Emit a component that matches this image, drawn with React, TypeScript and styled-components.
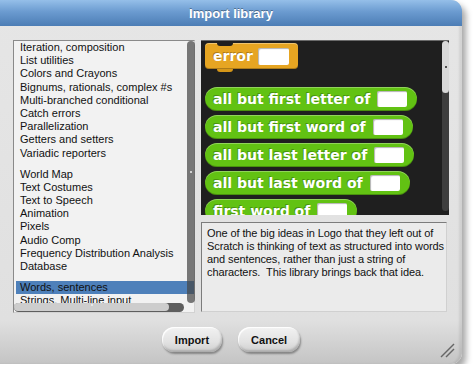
import { FC } from "react";
import { styled, createGlobalStyle } from "styled-components";

const GlobalStyle = createGlobalStyle`
  html, body {
    margin: 0;
    padding: 0;
    background: #ffffff;
  }
`;

type LibItem = { label: string; selected?: boolean } | "sep";

const libraries: LibItem[] = [
  { label: "Iteration, composition" },
  { label: "List utilities" },
  { label: "Colors and Crayons" },
  { label: "Bignums, rationals, complex #s" },
  { label: "Multi-branched conditional" },
  { label: "Catch errors" },
  { label: "Parallelization" },
  { label: "Getters and setters" },
  { label: "Variadic reporters" },
  "sep",
  { label: "World Map" },
  { label: "Text Costumes" },
  { label: "Text to Speech" },
  { label: "Animation" },
  { label: "Pixels" },
  { label: "Audio Comp" },
  { label: "Frequency Distribution Analysis" },
  { label: "Database" },
  "sep",
  { label: "Words, sentences", selected: true },
  { label: "Strings, Multi-line input" },
  { label: "Text processing" },
];

const reporters = [
  "all but first letter of",
  "all but first word of",
  "all but last letter of",
  "all but last word of",
  "first word of",
];

const App: FC = () => {
  return (
    <>
      <GlobalStyle />
      <Dialog>
        <TitleBar>Import library</TitleBar>
        <Body>
          <Panes>
            <ListPane>
              <ListBox>
                {libraries.map((item, i) =>
                  item === "sep" ? (
                    <Separator key={i} />
                  ) : (
                    <ListItem key={i} $selected={item.selected}>
                      {item.label}
                    </ListItem>
                  )
                )}
              </ListBox>
              <VScroll>
                <ScrollDot />
              </VScroll>
              <HScroll>
                <HThumb>
                  <ScrollDot />
                </HThumb>
              </HScroll>
            </ListPane>

            <RightColumn>
              <Palette>
                <BlockStack>
                  <CommandBlock>
                    <BlockLabel>error</BlockLabel>
                    <Slot $w={31} $h={17} />
                  </CommandBlock>
                  {reporters.map((r) => (
                    <Reporter key={r}>
                      <BlockLabel>{r}</BlockLabel>
                      <Slot $w={30} $h={16} />
                    </Reporter>
                  ))}
                </BlockStack>
                <PaletteScroll>
                  <PaletteThumb>
                    <ScrollDot $dark />
                  </PaletteThumb>
                </PaletteScroll>
              </Palette>
              <Description>
                One of the big ideas in Logo that they left out of Scratch is
                thinking of text as structured into words and sentences, rather
                than just a string of characters.&nbsp; This library brings back
                that idea.
              </Description>
            </RightColumn>
          </Panes>

          <ButtonRow>
            <Button>Import</Button>
            <Button>Cancel</Button>
          </ButtonRow>

          <Grip width="16" height="16" viewBox="0 0 16 16">
            <line x1="2" y1="15" x2="15" y2="2" stroke="#666" strokeWidth="1.4" />
            <line x1="7" y1="15" x2="15" y2="7" stroke="#666" strokeWidth="1.4" />
          </Grip>
        </Body>
      </Dialog>
    </>
  );
};

const Dialog = styled.div`
  width: 462px;
  height: 364px;
  display: flex;
  flex-direction: column;
  background: linear-gradient(to bottom, #e6e6e6 0%, #e0e0e0 88%, #c4c4c4 100%);
  border-radius: 0 11px 11px 0;
  box-shadow: 4px 5px 6px rgba(0, 0, 0, 0.35), inset -3px 0 2px rgba(0, 0, 0, 0.08);
  overflow: hidden;
  font-family: "Liberation Sans", Arial, sans-serif;
`;

const TitleBar = styled.div`
  height: 26px;
  flex-shrink: 0;
  display: flex;
  align-items: center;
  justify-content: center;
  background: linear-gradient(to bottom, #95bfe9 0%, #6b9bd0 45%, #4c7db5 100%);
  color: #ffffff;
  font-weight: bold;
  font-size: 13px;
  text-shadow: 0 -1px 0 rgba(0, 0, 0, 0.35);
`;

const Body = styled.div`
  flex: 1;
  position: relative;
  display: flex;
  flex-direction: column;
  padding: 14px 13px 0 13px;
`;

const Panes = styled.div`
  display: flex;
  gap: 6px;
  height: 273px;
`;

const ListPane = styled.div`
  position: relative;
  width: 182px;
  height: 273px;
`;

const ListBox = styled.div`
  height: 100%;
  box-sizing: border-box;
  background: #f2f2f2;
  border: 1px solid #d2d2d2;
  border-top-color: #8a8a8a;
  border-left-color: #8a8a8a;
  overflow: hidden;
  font-size: 11px;
  color: #111;
`;

const ListItem = styled.div<{ $selected?: boolean }>`
  height: 13.2px;
  line-height: 13.2px;
  white-space: nowrap;
  padding-left: ${(p) => (p.$selected ? "4px" : "6px")};
  margin-left: ${(p) => (p.$selected ? "2px" : "0")};
  background: ${(p) => (p.$selected ? "#4e80ba" : "transparent")};
`;

const Separator = styled.div`
  height: 8px;
`;

const VScroll = styled.div`
  position: absolute;
  top: 1px;
  right: 0;
  width: 8px;
  height: 262px;
  border-radius: 4px;
  background: rgba(70, 70, 70, 0.72);
  display: flex;
  align-items: center;
  justify-content: center;
`;

const ScrollDot = styled.span<{ $dark?: boolean }>`
  width: 2px;
  height: 2px;
  border-radius: 1px;
  background: ${(p) => (p.$dark ? "#222" : "#f0f0f0")};
`;

const HScroll = styled.div`
  position: absolute;
  left: 1px;
  bottom: 1px;
  width: 170px;
  height: 9px;
  border-radius: 5px;
  background: #5e5e5e;
  display: flex;
`;

const HThumb = styled.div`
  width: 155px;
  height: 8px;
  border-radius: 4px;
  background: #cdcdcd;
  display: flex;
  justify-content: center;
  align-items: flex-start;
  padding-top: 1px;
  box-sizing: border-box;
`;

const RightColumn = styled.div`
  display: flex;
  flex-direction: column;
  gap: 7px;
  width: 248px;
`;

const Palette = styled.div`
  position: relative;
  height: 175px;
  background: #1f1f1f;
  border-top: 1px solid #6a6a6a;
  box-sizing: border-box;
  overflow: hidden;
`;

const BlockStack = styled.div`
  display: flex;
  flex-direction: column;
  align-items: flex-start;
  gap: 4px;
  padding: 2px 0 0 4px;
`;

const BlockLabel = styled.span`
  font-family: "DejaVu Sans", Verdana, sans-serif;
  font-weight: bold;
  font-size: 14px;
  color: #ffffff;
  white-space: nowrap;
  text-shadow: -1px -1px 0 rgba(0, 0, 0, 0.25);
`;

const CommandBlock = styled.div`
  position: relative;
  display: flex;
  align-items: center;
  gap: 5px;
  height: 26px;
  padding: 0 9px 0 8px;
  margin-bottom: 14px;
  background: #e6a522;
  border-radius: 4px;
  box-shadow: inset 0 1px 0 rgba(255, 255, 255, 0.35), inset 0 -1px 0 rgba(0, 0, 0, 0.25);

  &::before {
    content: "";
    position: absolute;
    top: 0;
    left: 12px;
    width: 16px;
    height: 3px;
    background: #1f1f1f;
    border-radius: 0 0 3px 3px;
  }

  &::after {
    content: "";
    position: absolute;
    bottom: -3px;
    left: 12px;
    width: 16px;
    height: 3px;
    background: #d59618;
    border-radius: 0 0 3px 3px;
  }
`;

const Reporter = styled.div`
  display: flex;
  align-items: center;
  gap: 7px;
  height: 24px;
  padding: 0 10px 0 8px;
  background: #62c213;
  border-radius: 12px;
  box-shadow: inset 0 1px 0 rgba(255, 255, 255, 0.3), inset 0 -1px 0 rgba(0, 0, 0, 0.25);
`;

const Slot = styled.span<{ $w: number; $h: number }>`
  width: ${(p) => p.$w}px;
  height: ${(p) => p.$h}px;
  background: #ffffff;
  border-radius: 2px;
  box-shadow: inset 1px 1px 1px rgba(0, 0, 0, 0.3);
`;

const PaletteScroll = styled.div`
  position: absolute;
  top: 0;
  right: 0;
  width: 7px;
  height: 170px;
  border-radius: 4px;
  background: #3e3e3e;
`;

const PaletteThumb = styled.div`
  height: 52px;
  border-radius: 4px;
  background: #d9d9d9;
  display: flex;
  align-items: center;
  justify-content: center;
`;

const Description = styled.div`
  height: 90px;
  width: 246px;
  box-sizing: border-box;
  padding: 4px 0 4px 5px;
  background: #ebebeb;
  border: 1px solid #d0d0d0;
  border-top-color: #7c7c7c;
  border-left-color: #7c7c7c;
  font-size: 11px;
  line-height: 13px;
  letter-spacing: -0.1px;
  color: #111;
`;

const ButtonRow = styled.div`
  display: flex;
  justify-content: center;
  gap: 16px;
  margin-top: 14px;
`;

const Button = styled.button`
  height: 25px;
  padding: 0 13px;
  border: none;
  border-radius: 12px;
  background: linear-gradient(to bottom, #f2f2f2 0%, #e2e2e2 60%, #cfcfcf 100%);
  box-shadow: 1px 2px 2px rgba(0, 0, 0, 0.35), inset -1px -2px 2px rgba(0, 0, 0, 0.18),
    inset 1px 1px 1px #ffffff;
  font-family: "Liberation Sans", Arial, sans-serif;
  font-weight: bold;
  font-size: 11px;
  color: #111;
`;

const Grip = styled.svg`
  position: absolute;
  right: 7px;
  bottom: 6px;
`;

export default App;
